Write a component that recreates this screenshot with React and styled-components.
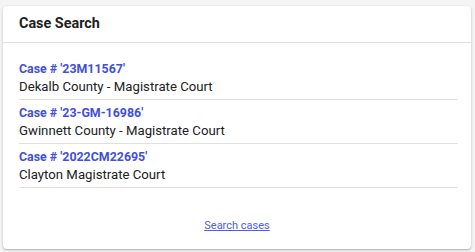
import React from "react";
import styled, { createGlobalStyle } from "styled-components";

const Global = createGlobalStyle`
  html, body { margin: 0; padding: 0; background: #f4f4f4; }
  body { font-family: Roboto, "Noto Sans", Arial, sans-serif; }
`;

const Page = styled.div`
  padding: 6px 4px 3px 3px;
`;

const Card = styled.section`
  background: #fff;
  border-radius: 4px;
  box-shadow: 0 1px 3px rgba(0, 0, 0, 0.2), 0 1px 1px rgba(0, 0, 0, 0.12);
  height: 243px;
  display: flex;
  flex-direction: column;
  box-sizing: border-box;
`;

const Header = styled.header`
  padding: 8px 16px 8px;
  border-bottom: 1px solid #e0e0e0;
`;

const Title = styled.h2`
  margin: 0;
  font-size: 14.4px;
  line-height: 20px;
  font-weight: 700;
  color: #212121;
`;

const List = styled.ul`
  list-style: none;
  margin: 0;
  padding: 13px 13px 0 16px;
`;

const Item = styled.li`
  padding: 5px 0 2px;
  border-bottom: 1px solid #e0e0e0;
`;

const CaseLink = styled.a`
  display: block;
  font-size: 12.4px;
  line-height: 16px;
  font-weight: 700;
  color: #3f4fe0;
  text-decoration: none;
`;

const Court = styled.div`
  font-size: 13.2px;
  line-height: 20px;
  color: #212121;
`;

const Footer = styled.footer`
  padding: 26px 0 0;
  text-align: center;
`;

const SearchLink = styled.a`
  font-size: 11px;
  line-height: 16px;
  color: #4a5cf0;
  text-decoration: underline;
`;

const cases = [
  { id: "23M11567", court: "Dekalb County - Magistrate Court" },
  { id: "23-GM-16986", court: "Gwinnett County - Magistrate Court" },
  { id: "2022CM22695", court: "Clayton Magistrate Court" },
];

export default function App() {
  return (
    <>
      <Global />
      <Page>
        <Card>
          <Header>
            <Title>Case Search</Title>
          </Header>
          <List>
            {cases.map((c) => (
              <Item key={c.id}>
                <CaseLink href="#">Case # '{c.id}'</CaseLink>
                <Court>{c.court}</Court>
              </Item>
            ))}
          </List>
          <Footer>
            <SearchLink href="#">Search cases</SearchLink>
          </Footer>
        </Card>
      </Page>
    </>
  );
}
